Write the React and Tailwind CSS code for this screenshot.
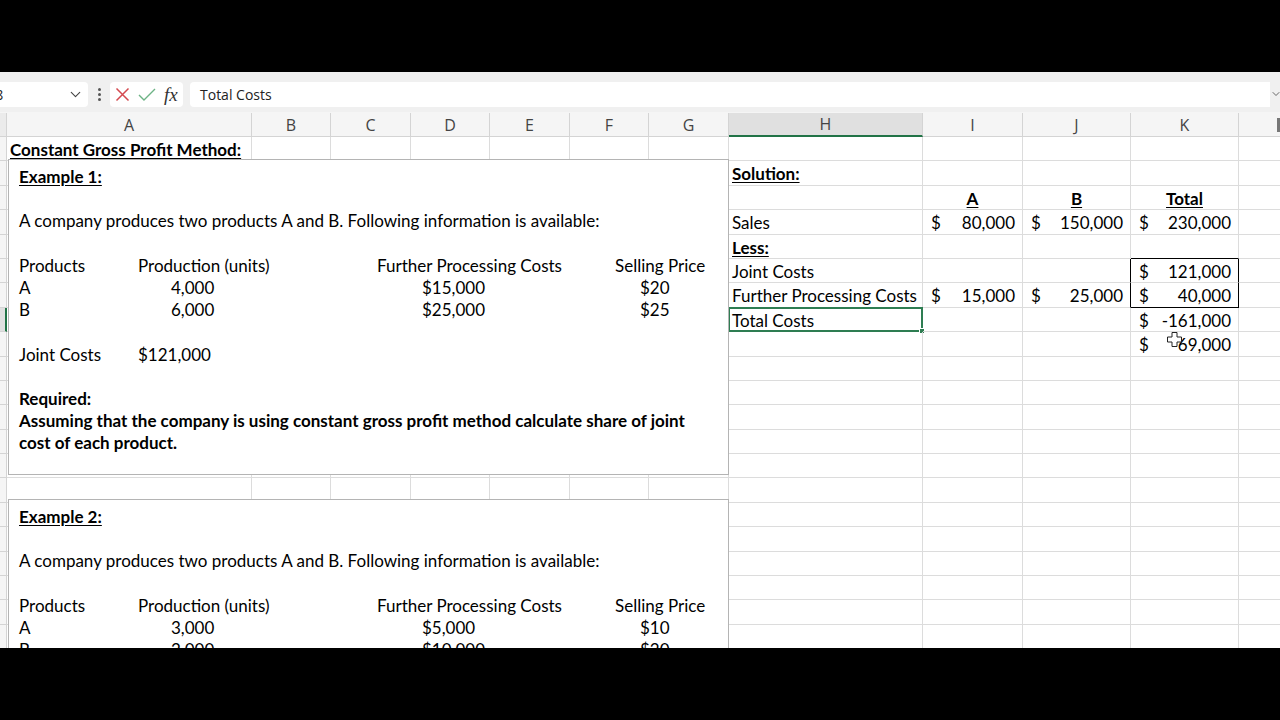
import React from "react";
import { ChevronDown } from "lucide-react";

// column letters with the widths they have on screen (A starts after the clipped row header)
const COLS = [
  { key: "A", w: "w-[245px]" },
  { key: "B", w: "w-[79px]" },
  { key: "C", w: "w-[80px]" },
  { key: "D", w: "w-[79px]" },
  { key: "E", w: "w-[80px]" },
  { key: "F", w: "w-[79px]" },
  { key: "G", w: "w-[80px]" },
  { key: "H", w: "w-[194px]" },
  { key: "I", w: "w-[100px]" },
  { key: "J", w: "w-[108px]" },
  { key: "K", w: "w-[108px]" },
  { key: "L", w: "w-[60px]" },
];

const ROW_COUNT = 22;
const SELECTED_ROW = 8;

function Money({ value }) {
  return (
    <div className="flex w-full justify-between pl-[8px] pr-[7px]">
      <span>$</span>
      <span>{value}</span>
    </div>
  );
}

function Heading({ children, center }) {
  return (
    <span className={center ? "w-full text-center font-bold underline underline-offset-2" : "pl-[3px] font-bold underline underline-offset-2"}>
      {children}
    </span>
  );
}

const CELLS = {
  A1: <Heading>Constant Gross Profit Method:</Heading>,
  H2: <Heading>Solution:</Heading>,
  I3: <Heading center>A</Heading>,
  J3: <Heading center>B</Heading>,
  K3: <Heading center>Total</Heading>,
  H4: <span className="pl-[3px]">Sales</span>,
  I4: <Money value="80,000" />,
  J4: <Money value="150,000" />,
  K4: <Money value="230,000" />,
  H5: <Heading>Less:</Heading>,
  H6: <span className="pl-[3px]">Joint Costs</span>,
  K6: <Money value="121,000" />,
  H7: <span className="pl-[3px]">Further Processing Costs</span>,
  I7: <Money value="15,000" />,
  J7: <Money value="25,000" />,
  K7: <Money value="40,000" />,
  H8: <span className="pl-[3px]">Total Costs</span>,
  K8: <Money value="-161,000" />,
  K9: <Money value="69,000" />,
};

// cells that carry the black outline around K6:K7
const EXTRA = {
  K5: "border-b-black",
  J6: "border-r-black",
  K6: "border-r-black",
  J7: "border-r-black",
  K7: "border-r-black border-b-black",
};

function FormulaBar() {
  return (
    <div className="flex h-[40px] items-start bg-[#f0f0f0] pt-[10px] pr-[4px]">
      <div className="flex h-[25px] w-[88px] items-center justify-between overflow-hidden rounded-r-[4px] bg-white pr-[4px] text-[14px] text-[#222]">
        <span className="-ml-[15px] font-['Open_Sans',sans-serif]">H8</span>
        <ChevronDown size={17} strokeWidth={1.6} className="text-[#444]" />
      </div>
      <div className="flex h-[25px] w-[22px] flex-col items-center justify-center gap-[2px]">
        <span className="h-[3px] w-[3px] rounded-full bg-[#555]" />
        <span className="h-[3px] w-[3px] rounded-full bg-[#555]" />
        <span className="h-[3px] w-[3px] rounded-full bg-[#555]" />
      </div>
      <div className="flex h-[25px] w-[73px] items-center gap-[8px] rounded-[4px] bg-white pl-[5px]">
        <svg width="15" height="15" viewBox="0 0 15 15">
          <path d="M1.5 1.5 L13.5 13.5 M13.5 1.5 L1.5 13.5" stroke="#d4494f" strokeWidth="1.5" fill="none" />
        </svg>
        <svg width="18" height="15" viewBox="0 0 18 15">
          <path d="M1 8 L6 13 L17 2" stroke="#6db385" strokeWidth="1.4" fill="none" />
        </svg>
        <span className="font-['Liberation_Serif',serif] text-[19px] italic leading-none text-[#333]">fx</span>
      </div>
      <div className="ml-[7px] flex h-[25px] flex-1 items-center rounded-l-[4px] bg-white pl-[10px] font-['Open_Sans',sans-serif] text-[14px] text-[#222]">
        Total Costs
      </div>
      <ChevronDown size={12} strokeWidth={1.6} className="mt-[6px] -mr-[6px] text-[#444]" />
    </div>
  );
}

function ColumnHeaders() {
  return (
    <div className="flex h-[25px] bg-[#f5f5f5] pt-[1px] font-['Open_Sans',sans-serif] text-[16px] text-[#444]">
      <div className="w-[7px] shrink-0 border-r border-b border-[#d4d4d4] bg-[#ebebeb]" />
      {COLS.map((c) => (
        <div
          key={c.key}
          className={
            c.key === "H"
              ? "flex shrink-0 items-center justify-center border-r border-b-2 border-r-[#d4d4d4] border-b-[#217346] bg-[#e0e0e0] " + c.w
              : "flex shrink-0 items-center justify-center border-r border-b border-[#d4d4d4] " + c.w
          }
        >
          {c.key === "L" ? "" : c.key}
        </div>
      ))}
    </div>
  );
}

function Grid() {
  const rows = Array.from({ length: ROW_COUNT }, (_, i) => i + 1);
  return (
    <div className="flex flex-col">
      {rows.map((r) => (
        <div key={r} className="flex h-[24.4px] shrink-0">
          <div
            className={
              r === SELECTED_ROW
                ? "w-[7px] shrink-0 border-r-2 border-b border-r-[#217346] border-b-[#d4d4d4] bg-[#e0e0e0]"
                : "w-[7px] shrink-0 border-r border-b border-[#d4d4d4] bg-[#f5f5f5]"
            }
          />
          {COLS.map((c) => {
            const id = c.key + r;
            const selected = id === "H" + SELECTED_ROW;
            return (
              <div
                key={id}
                className={
                  "relative flex shrink-0 items-center whitespace-nowrap border-r border-b border-[#dcdcdc] pt-[2px] " +
                  c.w +
                  " " +
                  (EXTRA[id] || "")
                }
              >
                {CELLS[id]}
                {selected && (
                  <div className="pointer-events-none absolute -top-[1px] -left-[1px] -right-[1px] -bottom-[1px] border-2 border-[#2e7d52]">
                    <span className="absolute -right-[4px] -bottom-[4px] h-[6px] w-[6px] border border-white bg-[#2e7d52]" />
                  </div>
                )}
              </div>
            );
          })}
        </div>
      ))}
    </div>
  );
}

function TabRow({ a, b, c, d, values }) {
  return (
    <div className="flex">
      <span className="w-[119px] shrink-0">{a}</span>
      <span className={values ? "w-[239px] shrink-0 pl-[33px]" : "w-[239px] shrink-0"}>{b}</span>
      <span className={values ? "w-[238px] shrink-0 pl-[45px]" : "w-[238px] shrink-0"}>{c}</span>
      <span className={values ? "pl-[25px]" : ""}>{d}</span>
    </div>
  );
}

function ExampleBox({ title, rows, tail, className }) {
  return (
    <div className={"absolute left-[8px] w-[721px] border border-[#b4b4b4] bg-white pt-[6px] pl-[10px] leading-[22.2px] " + className}>
      <div>
        <span className="font-bold underline underline-offset-2">{title}</span>
      </div>
      <div>&nbsp;</div>
      <div>A company produces two products A and B. Following information is available:</div>
      <div>&nbsp;</div>
      <TabRow a="Products" b="Production (units)" c="Further Processing Costs" d="Selling Price" />
      {rows.map((row) => (
        <TabRow key={row[0]} a={row[0]} b={row[1]} c={row[2]} d={row[3]} values />
      ))}
      {tail}
    </div>
  );
}

export default function App() {
  return (
    <div className="flex h-[720px] w-[1280px] flex-col overflow-hidden bg-black font-['Lato',sans-serif] text-[17px] text-black">
      <div className="h-[72px] shrink-0" />
      <div className="relative h-[576px] shrink-0 overflow-hidden bg-white">
        <FormulaBar />
        <ColumnHeaders />
        <div className="relative">
          <Grid />
          <ExampleBox
            title="Example 1:"
            className="top-[22px] h-[316px]"
            rows={[
              ["A", "4,000", "$15,000", "$20"],
              ["B", "6,000", "$25,000", "$25"],
            ]}
            tail={
              <>
                <div>&nbsp;</div>
                <div className="flex">
                  <span className="w-[119px] shrink-0">Joint Costs</span>
                  <span>$121,000</span>
                </div>
                <div>&nbsp;</div>
                <div className="font-bold">Required:</div>
                <div className="font-bold">
                  Assuming that the company is using constant gross profit method calculate share of joint
                </div>
                <div className="font-bold">cost of each product.</div>
              </>
            }
          />
          <ExampleBox
            title="Example 2:"
            className="top-[362px] h-[220px]"
            rows={[
              ["A", "3,000", "$5,000", "$10"],
              ["B", "2,000", "$10,000", "$20"],
            ]}
          />
          {/* mouse pointer over K9 */}
          <svg className="absolute left-[1167px] top-[195px]" width="15" height="15" viewBox="0 0 15 15">
            <path d="M5 0.5 H10 V5 H14.5 V10 H10 V14.5 H5 V10 H0.5 V5 H5 Z" fill="white" stroke="#222" strokeWidth="1" />
          </svg>
        </div>
        <div className="absolute right-0 top-[46px] h-[14px] w-[3px] bg-[#777]" />
      </div>
      <div className="h-[72px] shrink-0" />
    </div>
  );
}
